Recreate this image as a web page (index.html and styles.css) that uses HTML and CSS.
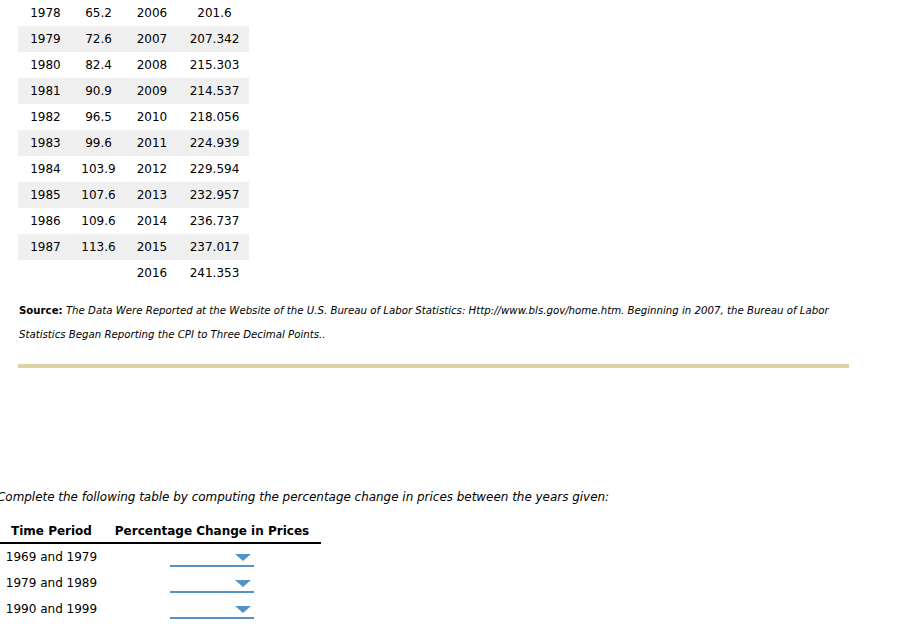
FILE: index.html
```html
<!DOCTYPE html>
<html>
<head>
<meta charset="utf-8">
<link rel="stylesheet" href="styles.css">
</head>
<body>
<div class="page">
  <table class="cpi">
    <colgroup><col class="c1"><col class="c2"><col class="c3"><col class="c4"></colgroup>
    <tbody>
      <tr><td>1978</td><td>65.2</td><td>2006</td><td>201.6</td></tr>
      <tr class="alt"><td>1979</td><td>72.6</td><td>2007</td><td>207.342</td></tr>
      <tr><td>1980</td><td>82.4</td><td>2008</td><td>215.303</td></tr>
      <tr class="alt"><td>1981</td><td>90.9</td><td>2009</td><td>214.537</td></tr>
      <tr><td>1982</td><td>96.5</td><td>2010</td><td>218.056</td></tr>
      <tr class="alt"><td>1983</td><td>99.6</td><td>2011</td><td>224.939</td></tr>
      <tr><td>1984</td><td>103.9</td><td>2012</td><td>229.594</td></tr>
      <tr class="alt"><td>1985</td><td>107.6</td><td>2013</td><td>232.957</td></tr>
      <tr><td>1986</td><td>109.6</td><td>2014</td><td>236.737</td></tr>
      <tr class="alt"><td>1987</td><td>113.6</td><td>2015</td><td>237.017</td></tr>
      <tr><td></td><td></td><td>2016</td><td>241.353</td></tr>
    </tbody>
  </table>
  <p class="source"><b>Source:</b> <i>The Data Were Reported at the Website of the U.S. Bureau of Labor Statistics: Http://www.bls.gov/home.htm. Beginning in 2007, the Bureau of Labor Statistics Began Reporting the CPI to Three Decimal Points..</i></p>
  <div class="rule"></div>
</div>
<div class="question">
  <p class="prompt">Complete the following table by computing the percentage change in prices between the years given:</p>
  <table class="answers">
    <thead>
      <tr><th class="a1">Time Period</th><th class="a2">Percentage Change in Prices</th></tr>
    </thead>
    <tbody>
      <tr><td>1969 and 1979</td><td><span class="dropdown"><span class="caret"></span></span></td></tr>
      <tr><td>1979 and 1989</td><td><span class="dropdown"><span class="caret"></span></span></td></tr>
      <tr><td>1990 and 1999</td><td><span class="dropdown"><span class="caret"></span></span></td></tr>
    </tbody>
  </table>
</div>
</body>
</html>
```

FILE: styles.css
```css
html, body {
  margin: 0;
  padding: 0;
  background: #fff;
  color: #000;
  font-family: "DejaVu Sans", Verdana, sans-serif;
  font-size: 12px;
}

.page {
  padding-left: 18px;
}

.cpi {
  border-collapse: collapse;
  table-layout: fixed;
  width: 231px;
}
.cpi .c1 { width: 55px; }
.cpi .c2 { width: 51px; }
.cpi .c3 { width: 56px; }
.cpi .c4 { width: 69px; }
.cpi td {
  height: 26px;
  padding: 0;
  text-align: center;
  vertical-align: middle;
  font-size: 12px;
}
.cpi tr.alt td {
  background: #efefef;
}

.source {
  margin: 13px 0 0 1px;
  width: 840px;
  font-size: 10.2px;
  line-height: 24px;
}

.rule {
  margin-top: 17px;
  width: 831px;
  height: 4px;
  background: #ddd1a5;
}

.question {
  margin-top: 121px;
}

.prompt {
  margin: 0 0 0 -3px;
  font-size: 11.95px;
  font-style: italic;
  line-height: 16px;
}

.answers {
  margin-top: 12px;
  border-collapse: collapse;
  width: 321px;
}
.answers th {
  height: 22px;
  padding: 3px 0 0;
  font-size: 12px;
  font-weight: bold;
  text-align: center;
  vertical-align: middle;
  border-bottom: 2px solid #000;
}
.answers th.a1 { width: 103px; }
.answers td {
  height: 26px;
  padding: 0;
  text-align: center;
  vertical-align: middle;
  font-size: 12px;
}

.dropdown {
  position: relative;
  display: inline-block;
  vertical-align: middle;
  width: 84px;
  height: 18px;
  margin-top: 0;
  border-bottom: 2px solid #5592c6;
}
.caret {
  position: absolute;
  right: 3px;
  top: 7px;
  width: 0;
  height: 0;
  border-left: 8px solid transparent;
  border-right: 8px solid transparent;
  border-top: 7px solid #5592c6;
}
```
